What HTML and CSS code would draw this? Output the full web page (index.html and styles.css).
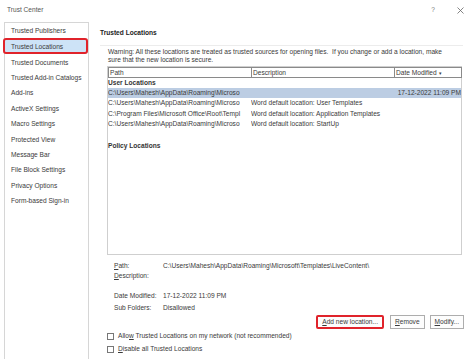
FILE: index.html
```html
<!DOCTYPE html>
<html lang="en">
<head>
    <meta charset="UTF-8">
    <title>Trust Center</title>
    <link rel="stylesheet" href="styles.css">
</head>
<body>
    <div class="titlebar">
        <span class="title">Trust Center</span>
        <span class="help">?</span>
        <svg class="close" width="7" height="7" viewBox="0 0 7 7">
            <path d="M0.5 0.5 L6.5 6.5 M6.5 0.5 L0.5 6.5" stroke="#666" stroke-width="0.8"/>
        </svg>
    </div>

    <div class="main">
        <div class="nav">
            <div class="nav-item">Trusted Publishers</div>
            <div class="nav-item selected">Trusted Locations</div>
            <div class="nav-item">Trusted Documents</div>
            <div class="nav-item">Trusted Add-in Catalogs</div>
            <div class="nav-item">Add-ins</div>
            <div class="nav-item">ActiveX Settings</div>
            <div class="nav-item">Macro Settings</div>
            <div class="nav-item">Protected View</div>
            <div class="nav-item">Message Bar</div>
            <div class="nav-item">File Block Settings</div>
            <div class="nav-item">Privacy Options</div>
            <div class="nav-item">Form-based Sign-in</div>
        </div>

        <div class="content">
            <div class="heading">Trusted Locations</div>
            <p class="warning">Warning: All these locations are treated as trusted sources for opening files.&nbsp; If you change or add a location, make<br>sure that the new location is secure.</p>

            <div class="table">
                <div class="row head">
                    <div class="cell">Path</div>
                    <div class="cell">Description</div>
                    <div class="cell">Date Modified <span class="arrow">&#9662;</span></div>
                </div>
                <div class="group">User Locations</div>
                <div class="row active">
                    <div class="cell">C:\Users\Mahesh\AppData\Roaming\Microso</div>
                    <div class="cell"></div>
                    <div class="cell date">17-12-2022 11:09 PM</div>
                </div>
                <div class="row">
                    <div class="cell">C:\Users\Mahesh\AppData\Roaming\Microso</div>
                    <div class="cell">Word default location: User Templates</div>
                    <div class="cell"></div>
                </div>
                <div class="row">
                    <div class="cell">C:\Program Files\Microsoft Office\Root\Templ</div>
                    <div class="cell">Word default location: Application Templates</div>
                    <div class="cell"></div>
                </div>
                <div class="row">
                    <div class="cell">C:\Users\Mahesh\AppData\Roaming\Microso</div>
                    <div class="cell">Word default location: StartUp</div>
                    <div class="cell"></div>
                </div>
                <div class="group policy">Policy Locations</div>
            </div>

            <div class="details">
                <div class="detail"><span class="key"><u>P</u>ath:</span><span>C:\Users\Mahesh\AppData\Roaming\Microsoft\Templates\LiveContent\</span></div>
                <div class="detail"><span class="key"><u>D</u>escription:</span><span></span></div>
                <div class="detail gap"><span class="key">Date Modified:</span><span>17-12-2022 11:09 PM</span></div>
                <div class="detail small-gap"><span class="key">Sub Folders:</span><span>Disallowed</span></div>
            </div>

            <div class="buttons">
                <div class="btn marked"><u>A</u>dd new location...</div>
                <div class="btn"><u>R</u>emove</div>
                <div class="btn"><u>M</u>odify...</div>
            </div>

            <div class="check"><span class="box"></span><span>Allo<u>w</u> Trusted Locations on my network (not recommended)</span></div>
            <div class="check"><span class="box"></span><span><u>D</u>isable all Trusted Locations</span></div>
        </div>
    </div>
</body>
</html>
```

FILE: styles.css
```css
body {
    margin: 0;
    width: 474px;
    height: 359px;
    overflow: hidden;
    background: #fff;
    color: #333;
    font-family: "Liberation Sans", Arial, sans-serif;
    font-size: 6.6px;
}

u {
    text-decoration: underline;
    text-underline-offset: 1px;
}

.titlebar {
    height: 22px;
    display: flex;
    align-items: flex-start;
    padding-top: 6px;
    box-sizing: border-box;
}

.title {
    margin-left: 7px;
    flex: 1;
    color: #555;
}

.help {
    margin-right: 22px;
    color: #777;
}

.close {
    margin-right: 10px;
    margin-top: 1px;
}

.main {
    display: flex;
    height: 337px;
}

.nav {
    margin-left: 4px;
    width: 85px;
    border: 1px solid #d6d6d6;
    border-bottom: none;
    box-sizing: border-box;
}

.nav-item {
    height: 15.4px;
    display: flex;
    align-items: center;
    padding-left: 6px;
    color: #3a3a3a;
    white-space: nowrap;
}

.nav-item.selected {
    margin: 0 0 0 -2px;
    padding-left: 6px;
    background: #cde3f7;
    border: 2px solid #e0232b;
    border-radius: 3px;
    height: 16px;
    box-sizing: border-box;
}

.content {
    margin-left: 11px;
    width: 363px;
    display: flex;
    flex-direction: column;
}

.heading {
    font-weight: bold;
    line-height: 10px;
    margin-top: 6px;
    padding-bottom: 7px;
    border-bottom: 1px solid #ececec;
    color: #222;
}

.warning {
    margin: 2px 0 0 8px;
    line-height: 8px;
    color: #3a3a3a;
    white-space: nowrap;
}

.table {
    margin: 2px 0 0 7px;
    width: 355px;
    height: 189px;
    border: 1px solid #cfcfcf;
    box-sizing: border-box;
}

.row {
    display: grid;
    grid-template-columns: 143px 143px 1fr;
    height: 10.4px;
    line-height: 10.4px;
    white-space: nowrap;
    color: #3a3a3a;
}

.row .cell {
    overflow: hidden;
}

.row.head {
    height: 11px;
    line-height: 9px;
}

.row.head .cell {
    border: 1px solid #8a8a8a;
    border-right: none;
    padding-left: 1px;
}

.row.head .cell:last-child {
    border-right: 1px solid #8a8a8a;
    margin-right: -1px;
}

.arrow {
    font-size: 5px;
}

.row.active {
    background: #bccde3;
}

.cell.date {
    text-align: right;
}

.group {
    font-weight: bold;
    line-height: 10px;
    color: #333;
}

.group.policy {
    margin-top: 11px;
}

.details {
    margin: 6px 0 0 14px;
    color: #3a3a3a;
}

.detail {
    display: flex;
    line-height: 10px;
    white-space: nowrap;
}

.detail.gap {
    margin-top: 10px;
}

.detail.small-gap {
    margin-top: 2px;
}

.key {
    width: 49px;
    flex-shrink: 0;
}

.buttons {
    display: flex;
    justify-content: flex-end;
    gap: 5px;
    margin-top: 2px;
    margin-right: -1px;
}

.btn {
    height: 14px;
    line-height: 12px;
    padding: 0 4px;
    border: 1px solid #adadad;
    background: #fdfdfd;
    box-sizing: border-box;
    color: #3a3a3a;
}

.btn.marked {
    border: 2px solid #e0232b;
    border-radius: 2px;
    line-height: 10px;
    padding: 0 4px;
    margin-right: 1px;
}

.check {
    display: flex;
    align-items: center;
    line-height: 10px;
    margin-left: 7px;
    margin-top: 2px;
    color: #3a3a3a;
}

.check + .check {
    margin-top: 3px;
}

.box {
    width: 7px;
    height: 7px;
    border: 1px solid #777;
    box-sizing: border-box;
    margin-right: 4px;
}
```
